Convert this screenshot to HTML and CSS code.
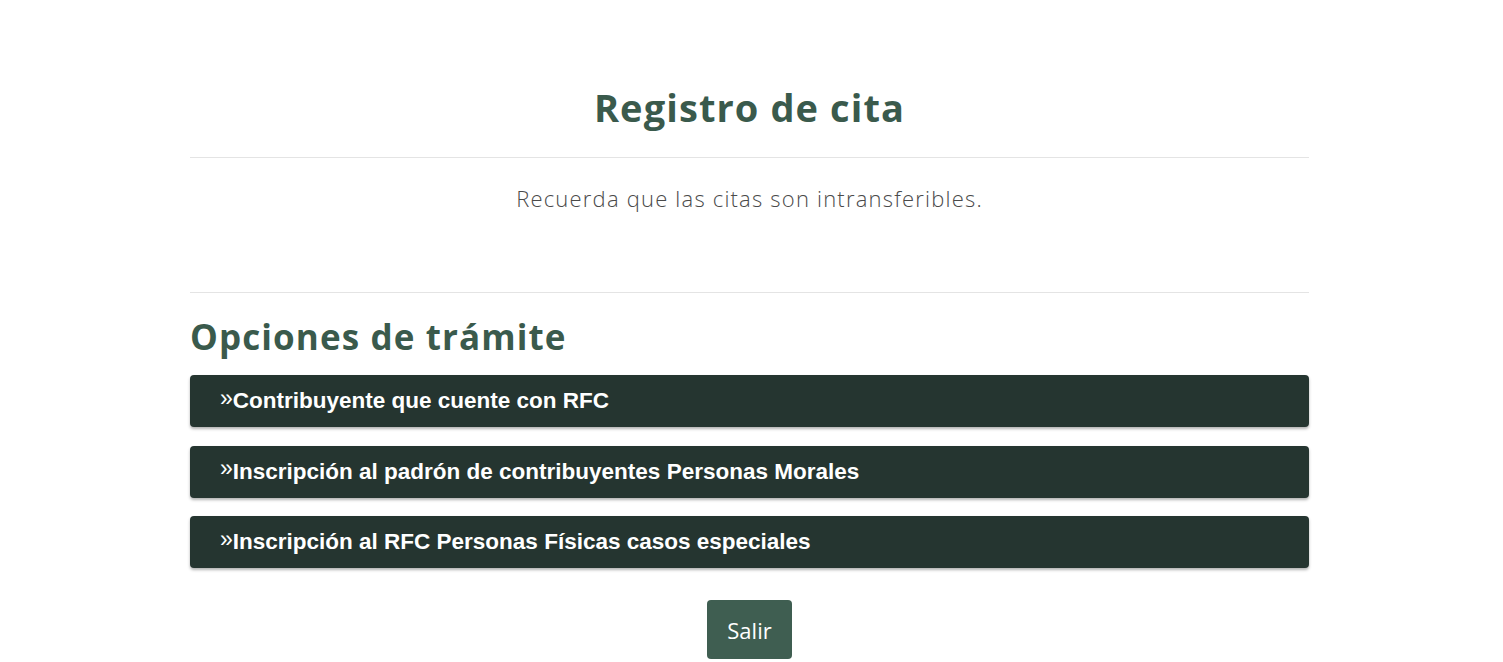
FILE: index.html
```html
<!DOCTYPE html>
<html lang="es">
<head>
<meta charset="utf-8">
<title>Registro de cita</title>
<link rel="stylesheet" href="styles.css">
</head>
<body>
<main class="container">
  <h1 class="title">Registro de cita</h1>
  <hr class="rule">
  <p class="notice">Recuerda que las citas son intransferibles.</p>
  <hr class="rule rule-second">
  <h2 class="section-title">Opciones de trámite</h2>
  <div class="options">
    <div class="option"><span class="chev">»</span>Contribuyente que cuente con RFC</div>
    <div class="option"><span class="chev">»</span>Inscripción al padrón de contribuyentes Personas Morales</div>
    <div class="option"><span class="chev">»</span>Inscripción al RFC Personas Físicas casos especiales</div>
  </div>
  <div class="actions">
    <button class="btn-exit" type="button">Salir</button>
  </div>
</main>
</body>
</html>
```
FILE: styles.css
```css
html, body {
  margin: 0;
  padding: 0;
  background: #ffffff;
}
body {
  font-family: "Open Sans", "Liberation Sans", sans-serif;
}
.container {
  width: 1119px;
  margin: 0 auto;
  padding-top: 82px;
  transform: translateX(-2px);
}
.title {
  margin: 0;
  text-align: center;
  font-size: 38px;
  font-weight: 700;
  letter-spacing: 1.1px;
  color: #3a5a4c;
  line-height: 50px;
}
.rule {
  border: 0;
  border-top: 1px solid #e4e4e4;
  margin: 25px 0 0 0;
}
.notice {
  margin: 26px 0 0 0;
  text-align: center;
  font-size: 22px;
  font-weight: 300;
  letter-spacing: 1.2px;
  color: #4a4a4a;
  line-height: 28px;
}
.rule-second {
  margin-top: 80px;
}
.section-title {
  margin: 20px 0 0 0;
  font-size: 35px;
  font-weight: 700;
  letter-spacing: 1.1px;
  color: #3a5a4c;
  line-height: 48px;
}
.options {
  margin-top: 14px;
  display: flex;
  flex-direction: column;
  gap: 18.5px;
}
.option {
  height: 52px;
  box-sizing: border-box;
  background: #253530;
  color: #ffffff;
  border-radius: 4px;
  box-shadow: 0 2px 3px rgba(0, 0, 0, 0.3);
  padding: 0 30px;
  display: flex;
  align-items: center;
  font-family: "Liberation Sans", Arial, sans-serif;
  font-weight: 700;
  font-size: 22.5px;
}
.chev {
  font-weight: 400;
  font-size: 23px;
  position: relative;
  top: -3px;
  margin-right: 0;
}
.actions {
  display: flex;
  justify-content: center;
  margin-top: 32px;
}
.btn-exit {
  width: 85px;
  height: 59px;
  background: #3f5e51;
  color: #ffffff;
  border: 0;
  border-radius: 4px;
  font-family: "Open Sans", "Liberation Sans", sans-serif;
  font-size: 22px;
  font-weight: 400;
  padding: 0;
}
```
